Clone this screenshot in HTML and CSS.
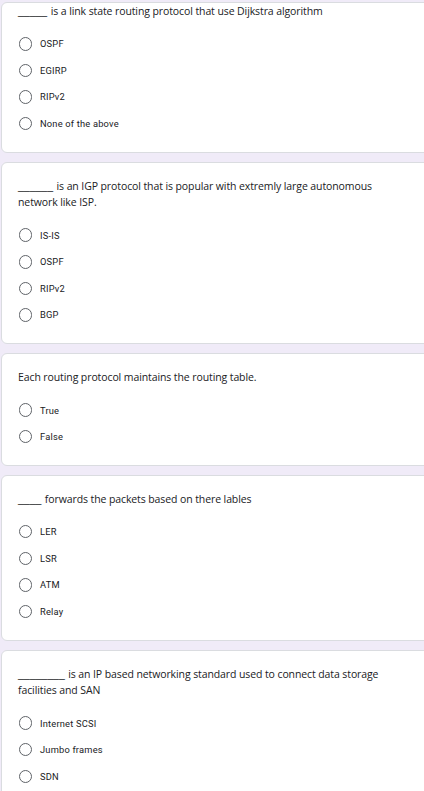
FILE: index.html
```html
<!DOCTYPE html>
<html lang="en">
<head>
<meta charset="utf-8">
<title>Quiz</title>
<link rel="stylesheet" href="styles.css">
</head>
<body>
<main class="form">
  <section class="card card-first">
    <div class="title"><span class="blank">_____</span>is a link state routing protocol that use Dijkstra algorithm</div>
    <div class="options">
      <label class="option"><span class="radio"></span><span class="opt-text">OSPF</span></label>
      <label class="option"><span class="radio"></span><span class="opt-text">EGIRP</span></label>
      <label class="option"><span class="radio"></span><span class="opt-text">RIPv2</span></label>
      <label class="option"><span class="radio"></span><span class="opt-text">None of the above</span></label>
    </div>
  </section>
  <section class="card">
    <div class="title"><span class="blank">______</span>is an IGP protocol that is popular with extremly large autonomous network like ISP.</div>
    <div class="options">
      <label class="option"><span class="radio"></span><span class="opt-text">IS-IS</span></label>
      <label class="option"><span class="radio"></span><span class="opt-text">OSPF</span></label>
      <label class="option"><span class="radio"></span><span class="opt-text">RIPv2</span></label>
      <label class="option"><span class="radio"></span><span class="opt-text">BGP</span></label>
    </div>
  </section>
  <section class="card">
    <div class="title">Each routing protocol maintains the routing table.</div>
    <div class="options">
      <label class="option"><span class="radio"></span><span class="opt-text">True</span></label>
      <label class="option"><span class="radio"></span><span class="opt-text">False</span></label>
    </div>
  </section>
  <section class="card">
    <div class="title"><span class="blank">____</span>forwards the packets based on there lables</div>
    <div class="options">
      <label class="option"><span class="radio"></span><span class="opt-text">LER</span></label>
      <label class="option"><span class="radio"></span><span class="opt-text">LSR</span></label>
      <label class="option"><span class="radio"></span><span class="opt-text">ATM</span></label>
      <label class="option"><span class="radio"></span><span class="opt-text">Relay</span></label>
    </div>
  </section>
  <section class="card">
    <div class="title"><span class="blank">________</span>is an IP based networking standard used to connect data storage facilities and SAN</div>
    <div class="options">
      <label class="option"><span class="radio"></span><span class="opt-text">Internet SCSI</span></label>
      <label class="option"><span class="radio"></span><span class="opt-text">Jumbo frames</span></label>
      <label class="option"><span class="radio"></span><span class="opt-text">SDN</span></label>
    </div>
  </section>
</main>
</body>
</html>
```
FILE: styles.css
```css
html, body {
  margin: 0;
  padding: 0;
  background: #f0ebf8;
  overflow: hidden;
}
body {
  width: 424px;
  height: 791px;
}
.form {
  display: flex;
  flex-direction: column;
  gap: 9px;
  margin-left: 1px;
  padding-top: 2px;
  width: 460px;
}
.card {
  background: #fff;
  border: 1px solid #dadce0;
  border-radius: 6px;
  padding: 15px 16px 15px 16px;
}
.card-first {
  padding-top: 0;
}
.title {
  font-family: "Open Sans", "Liberation Sans", sans-serif;
  font-size: 10.5px;
  line-height: 16.5px;
  color: #202124;
  width: 376px;
  letter-spacing: -0.1px;
}
.blank {
  display: inline-block;
  font-family: "Liberation Sans", sans-serif;
  letter-spacing: 0;
  margin-right: 3.5px;
}
.options {
  display: flex;
  flex-direction: column;
  margin-top: 11px;
}
.option {
  display: flex;
  align-items: center;
  height: 26.6px;
}
.radio {
  box-sizing: border-box;
  width: 13.5px;
  height: 13.5px;
  border: 1.4px solid #5f6368;
  border-radius: 50%;
  margin-left: 0.5px;
  flex: none;
}
.opt-text {
  margin-left: 8px;
  font-family: Roboto, "Liberation Sans", sans-serif;
  font-size: 9.3px;
  letter-spacing: 0.2px;
  color: #202124;
}
```
